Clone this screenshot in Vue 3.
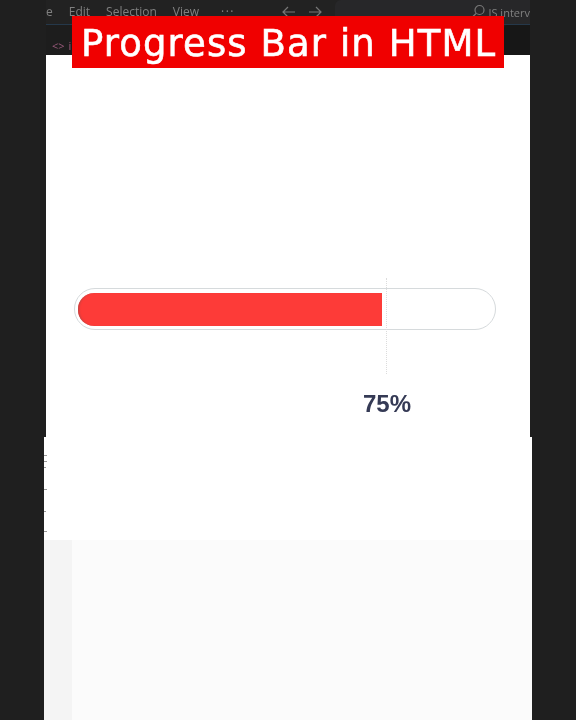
<template>
  <div class="page">
    <div class="title-banner">Progress Bar in HTML</div>

    <header class="menu-bar">
      <nav class="menu">
        <span>e</span>
        <span>Edit</span>
        <span>Selection</span>
        <span>View</span>
        <span class="dots">···</span>
      </nav>
      <div class="arrows">
        <svg width="14" height="12" viewBox="0 0 14 12"><path d="M13 6H1M6 1 1 6l5 5" /></svg>
        <svg width="14" height="12" viewBox="0 0 14 12"><path d="M1 6h12M8 1l5 5-5 5" /></svg>
      </div>
      <div class="search">
        <svg width="16" height="16" viewBox="0 0 16 16"><circle cx="9.5" cy="6" r="4.5" /><path d="M6 9.5 1.5 14" /></svg>
        <span>JS interv</span>
      </div>
    </header>

    <div class="tab-bar">
      <span class="tab-icon">&lt;&gt;</span>
      <span class="tab-name">i</span>
      <div class="tab-end"></div>
    </div>

    <main class="preview">
      <div class="track">
        <div class="fill" :style="{ width: progress + '%' }"></div>
        <i class="marker"></i>
        <span class="label">{{ progress }}%</span>
      </div>
    </main>

    <section class="strip">
      <i v-for="tick in ticks" :key="tick.top" class="tick" :style="{ top: tick.top + 'px', width: tick.width + 'px' }"></i>
    </section>

    <section class="editor">
      <div class="gutter"></div>
      <div class="lines"></div>
    </section>
  </div>
</template>

<script setup>
const progress = 75

// leftovers of the editor text peeking out at the left edge
const ticks = [
  { top: 18, width: 3 },
  { top: 24, width: 3 },
  { top: 30, width: 2 },
  { top: 52, width: 3 },
  { top: 74, width: 2 },
  { top: 94, width: 3 },
]
</script>

<style>
html, body {
  margin: 0;
  background: #1f1f1f;
}
</style>

<style scoped>
.page {
  position: relative;
  width: 576px;
  height: 720px;
  overflow: hidden;
  display: flex;
  flex-direction: column;
  align-items: center;
  background: #1f1f1f;
  font-family: "Open Sans", "Liberation Sans", sans-serif;
  filter: blur(0.4px);
}

.title-banner {
  position: absolute;
  top: 16px;
  left: 72px;
  z-index: 1;
  width: 432px;
  height: 52px;
  box-sizing: border-box;
  padding-left: 9px;
  background: #f00000;
  color: #fff;
  font-family: "DejaVu Sans", sans-serif;
  font-size: 37px;
  letter-spacing: 1.1px;
  line-height: 56px;
  white-space: nowrap;
  -webkit-text-stroke: 0.6px #fff;
}

.menu-bar {
  width: 484px;
  height: 24px;
  flex: none;
  display: flex;
  align-items: center;
  background: #222;
  color: #808080;
  font-size: 12px;
}

.menu {
  display: flex;
  gap: 16px;
  width: 236px;
  padding-bottom: 2px;
}

.dots {
  letter-spacing: 1.5px;
  margin-left: 6px;
}

.arrows {
  display: flex;
  gap: 12px;
  width: 53px;
}

.arrows path,
.search path,
.search circle {
  fill: none;
  stroke: #777;
  stroke-width: 1.2;
}

.search {
  flex: 1;
  height: 100%;
  display: flex;
  justify-content: flex-end;
  align-items: center;
  gap: 3px;
  background: #272729;
  border-radius: 6px 0 0 0;
  font-size: 11px;
  white-space: nowrap;
  overflow: hidden;
}

.search svg {
  flex: none;
}

.tab-bar {
  width: 484px;
  height: 31px;
  flex: none;
  box-sizing: border-box;
  padding: 14px 0 0 6px;
  display: flex;
  gap: 4px;
  background: #1d1d1d;
  border-top: 1px solid #25384a;
  color: #9b5a7c;
  font-size: 11px;
  line-height: 14px;
}

.tab-end {
  margin: -14px 0 0 auto;
  width: 26px;
  background: #171717;
  border-radius: 4px 0 0 0;
}

.preview {
  width: 484px;
  height: 382px;
  flex: none;
  box-sizing: border-box;
  padding: 233px 0 0 28px;
  background: #fff;
}

.track {
  position: relative;
  width: 422px;
  height: 42px;
  box-sizing: border-box;
  padding: 4px 4px 3px 3px;
  background: #fff;
  border: 1.5px solid #d6dadc;
  border-radius: 21px;
}

.fill {
  height: 100%;
  max-width: 304px;
  background: #fd3b38;
  border-radius: 16px 0 0 16px;
  box-shadow: inset 2px 0 2px -1px #b94543;
}

.marker {
  position: absolute;
  left: 311px;
  top: -11px;
  height: 96px;
  border-left: 1px dotted #dcdcdc;
}

.label {
  position: absolute;
  left: 288px;
  top: 102px;
  color: #353a55;
  font-family: "Liberation Sans", sans-serif;
  font-size: 24px;
  font-weight: 700;
  line-height: 26px;
}

.strip {
  position: relative;
  width: 488px;
  height: 103px;
  flex: none;
  background: #fff;
}

.tick {
  position: absolute;
  left: 0;
  height: 1px;
  background: #999;
}

.editor {
  width: 488px;
  flex: 1;
  display: flex;
  background: #fbfbfb;
}

.gutter {
  width: 28px;
  background: #f4f4f4;
}

.lines {
  flex: 1;
}
</style>
